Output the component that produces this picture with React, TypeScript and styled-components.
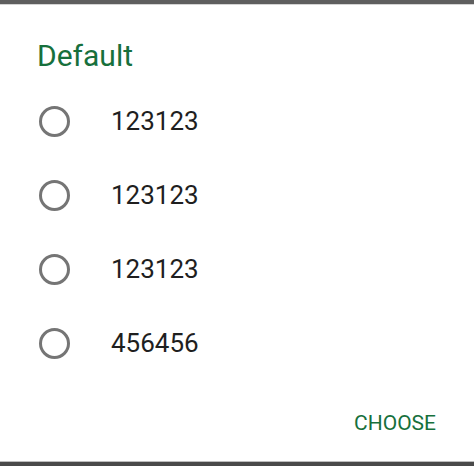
import React, { useState } from "react";
import styled, { createGlobalStyle } from "styled-components";

const GlobalStyle = createGlobalStyle`
  html, body {
    margin: 0;
    padding: 0;
    background: #fff;
    font-family: Roboto, "Noto Sans", "Liberation Sans", sans-serif;
  }
`;

const options = ["123123", "123123", "123123", "456456"];

const App: React.FC = () => {
  const [selected, setSelected] = useState<number | null>(null);

  return (
    <Screen>
      <GlobalStyle />
      <TopBar />
      <Dialog>
        <Title>Default</Title>
        <List>
          {options.map((label, i) => (
            <Row key={i} onClick={() => setSelected(i)}>
              <Radio checked={selected === i} />
              <Label>{label}</Label>
            </Row>
          ))}
        </List>
        <Actions>
          <ChooseButton>CHOOSE</ChooseButton>
        </Actions>
      </Dialog>
      <BottomBar />
    </Screen>
  );
};

const Screen = styled.div`
  width: 474px;
  height: 466px;
  display: flex;
  flex-direction: column;
  overflow: hidden;
  background: #fff;
`;

const TopBar = styled.div`
  height: 4px;
  background: #5f5f5f;
  border-bottom: 1px solid #d4d4d4;
  flex-shrink: 0;
`;

const Dialog = styled.div`
  flex: 1;
  display: flex;
  flex-direction: column;
`;

const Title = styled.h2`
  margin: 33px 0 0 37px;
  font-size: 30px;
  line-height: 36px;
  font-weight: 400;
  color: #17703c;
`;

const List = styled.div`
  margin-top: 10px;
  display: flex;
  flex-direction: column;
`;

const Row = styled.div`
  height: 74px;
  display: flex;
  align-items: center;
  padding-left: 39px;
  gap: 41px;
  cursor: pointer;
`;

const Radio = styled.span<{ checked: boolean }>`
  box-sizing: border-box;
  width: 31px;
  height: 31px;
  border-radius: 50%;
  border: 3px solid ${(p) => (p.checked ? "#17703c" : "#757575")};
  flex-shrink: 0;
`;

const Label = styled.span`
  font-size: 26px;
  color: #1f1f1f;
`;

const Actions = styled.div`
  margin-top: 31px;
  display: flex;
  justify-content: flex-end;
  padding-right: 38px;
`;

const ChooseButton = styled.button`
  border: none;
  background: none;
  padding: 0;
  font-family: inherit;
  font-size: 21px;
  line-height: 24px;
  color: #17703c;
  cursor: pointer;
`;

const BottomBar = styled.div`
  height: 4px;
  background: #4a4a4a;
  border-top: 1px solid #bdbdbd;
  flex-shrink: 0;
`;

export default App;
